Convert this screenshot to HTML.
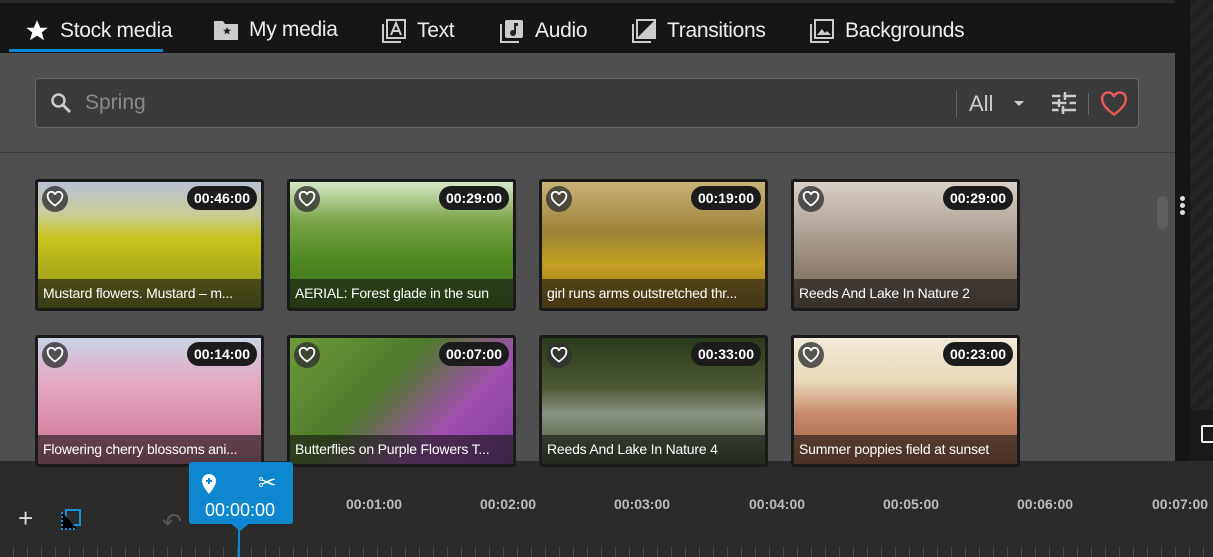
<!DOCTYPE html>
<html><head><meta charset="utf-8"><style>
*{margin:0;padding:0;box-sizing:border-box}
body{width:1213px;height:557px;overflow:hidden;background:#2b2b2b;font-family:"Liberation Sans",sans-serif;position:relative}
.top{position:absolute;left:0;top:0;width:1190px;height:53px;background:#161616;border-top:3px solid #2a2a2a}
.tab{position:absolute;top:18px;color:#eee;font-size:21px;display:flex;align-items:center;gap:10px;letter-spacing:-0.3px}
.ul{position:absolute;left:9px;top:49px;width:154px;height:3px;background:#0d88d0}
.panel{position:absolute;left:0;top:53px;width:1175px;height:408px;background:#4f4f4f}
.sep{position:absolute;left:0;top:152px;width:1175px;height:1px;background:#3c3c3c}
.search{position:absolute;left:35px;top:78px;width:1104px;height:50px;background:#3b3b3b;border:1px solid #6a6a6a;border-radius:4px}
.rcol{position:absolute;left:1175px;top:0;width:15px;height:461px;background:#161616}
.strip{position:absolute;left:1190px;top:0;width:23px;height:410px;background:repeating-linear-gradient(135deg,#202020 0 6px,#262626 6px 12px)}
.strip2{position:absolute;left:1190px;top:410px;width:23px;height:51px;background:#1a1a1a}
.card{position:absolute;width:229px;height:132px;border:3px solid #1a1a1a;border-radius:3px;overflow:hidden}
.cap{position:absolute;left:0;bottom:0;width:100%;height:29px;background:rgba(20,20,20,.6);color:#fff;font-size:14px;padding:6px 0 0 5px;white-space:nowrap;letter-spacing:-0.2px}
.dur{position:absolute;right:4px;top:4px;background:#1c1c1c;color:#fff;font-weight:bold;font-size:14px;border-radius:14px;padding:4px 7px}
.hrt{position:absolute;left:4px;top:4px;width:26px;height:26px;border-radius:50%;background:rgba(50,50,50,.8);display:flex;align-items:center;justify-content:center}
.tl{position:absolute;top:496px;color:#bbb;font-size:14px;font-weight:bold}
</style></head><body>
<div class="top"></div>
<div class="tab" style="left:24px"><svg width="26" height="26" viewBox="0 0 24 24"><path fill="#fff" d="M12 2l3 7h7l-5.6 4.3 2.1 7.2L12 16.3 5.5 20.5l2.1-7.2L2 9h7z"/></svg>Stock media</div>
<div class="tab" style="left:213px"><svg width="26" height="24" viewBox="0 0 26 24"><path fill="#ccc" d="M1 3h9l2 3h13v16H1z"/><path fill="#222" d="M14 9l1.2 2.6 2.8.2-2.1 1.8.7 2.8-2.6-1.5-2.5 1.5.6-2.8-2-1.8 2.8-.2z"/></svg>My media</div>
<div class="tab" style="left:381px"><svg width="26" height="26" viewBox="0 0 26 26"><path fill="none" stroke="#ccc" stroke-width="2" d="M2 6v18h18"/><rect x="6" y="2" width="18" height="18" fill="none" stroke="#ccc" stroke-width="2"/><path fill="none" stroke="#ccc" stroke-width="2" d="M10 17l5-12 5 12M12 13h6"/></svg>Text</div>
<div class="tab" style="left:499px"><svg width="26" height="26" viewBox="0 0 26 26"><path fill="none" stroke="#ccc" stroke-width="2" d="M2 6v18h18"/><rect x="6" y="2" width="18" height="18" rx="2" fill="#ccc"/><path fill="#222" d="M15 5h4v3h-2v7a3 3 0 1 1-2-2.8z"/></svg>Audio</div>
<div class="tab" style="left:631px"><svg width="26" height="26" viewBox="0 0 26 26"><path fill="none" stroke="#ccc" stroke-width="2" d="M2 6v18h18"/><rect x="6" y="2" width="18" height="18" fill="none" stroke="#ccc" stroke-width="2"/><path fill="#ccc" d="M7 19L23 3v16z"/></svg>Transitions</div>
<div class="tab" style="left:809px"><svg width="26" height="26" viewBox="0 0 26 26"><path fill="none" stroke="#ccc" stroke-width="2" d="M2 6v18h18"/><rect x="6" y="2" width="18" height="18" fill="none" stroke="#ccc" stroke-width="2"/><path fill="#ccc" d="M8 17l5-6 3 4 2-2 4 4z"/></svg>Backgrounds</div>
<div class="ul"></div>
<div class="panel"></div>
<div class="sep"></div>
<div class="search">
<svg style="position:absolute;left:13px;top:12px" width="24" height="24" viewBox="0 0 24 24"><circle cx="9.5" cy="9.5" r="6" fill="none" stroke="#ccc" stroke-width="2.5"/><path d="M14 14l7 7" stroke="#ccc" stroke-width="3"/></svg>
<span style="position:absolute;left:49px;top:12px;color:#8a8a8a;font-size:21px">Spring</span>
<div style="position:absolute;left:920px;top:12px;width:1px;height:26px;background:#666"></div>
<span style="position:absolute;left:933px;top:12px;color:#ccc;font-size:22px">All</span>
<div style="position:absolute;left:978px;top:22px;border:5px solid transparent;border-top:5px solid #ccc"></div>
<svg style="position:absolute;left:1015px;top:12px" width="26" height="24" viewBox="0 0 26 24"><path stroke="#ccc" stroke-width="2.5" d="M1 5h24M1 12h24M1 19h24"/><path stroke="#3b3b3b" stroke-width="3" d="M11 3v5M17 10v5M9 17v5"/><path stroke="#ccc" stroke-width="2.5" d="M14 1v8M8 8v8M12 15v8"/></svg>
<div style="position:absolute;left:1052px;top:14px;width:1px;height:22px;background:#666"></div>
<svg style="position:absolute;left:1064px;top:12px" width="28" height="26" viewBox="0 0 24 22"><path fill="none" stroke="#ef5a5a" stroke-width="2" d="M12 20S2 13.5 2 7.5A5 5 0 0 1 12 5a5 5 0 0 1 10 2.5C22 13.5 12 20 12 20z"/></svg>
</div>
<div style="position:absolute;left:1157px;top:196px;width:11px;height:33px;border-radius:6px;background:#5e5e5e"></div>
<div class="rcol"></div><div class="strip"></div><div class="strip2"></div>
<div style="position:absolute;left:1180px;top:196px;width:5px;height:5px;border-radius:50%;background:#ddd;box-shadow:0 7px 0 #ddd,0 14px 0 #ddd"></div>
<div style="position:absolute;left:1201px;top:425px;width:14px;height:18px;border:2px solid #eee;border-radius:2px"></div>

<div class="card" style="left:35px;top:179px;background:linear-gradient(180deg,#b9bfd6 0,#c9cd9a 25%,#c7c51a 45%,#a6a71a 75%,#6f7a1a 100%)"><div class="hrt"><svg width="18" height="16" viewBox="0 0 24 22"><path fill="none" stroke="#fff" stroke-width="2.5" d="M12 20S2 13.5 2 7.5A5 5 0 0 1 12 5a5 5 0 0 1 10 2.5C22 13.5 12 20 12 20z"/></svg></div><div class="dur">00:46:00</div><div class="cap">Mustard flowers. Mustard – m...</div></div>
<div class="card" style="left:287px;top:179px;background:linear-gradient(180deg,#d6e8c8 0,#7ea54a 30%,#4f8a22 60%,#3e6d18 100%)"><div class="hrt"><svg width="18" height="16" viewBox="0 0 24 22"><path fill="none" stroke="#fff" stroke-width="2.5" d="M12 20S2 13.5 2 7.5A5 5 0 0 1 12 5a5 5 0 0 1 10 2.5C22 13.5 12 20 12 20z"/></svg></div><div class="dur">00:29:00</div><div class="cap">AERIAL: Forest glade in the sun</div></div>
<div class="card" style="left:539px;top:179px;background:linear-gradient(180deg,#c8b478 0,#9c8236 40%,#c4a023 65%,#8c6c14 100%)"><div class="hrt"><svg width="18" height="16" viewBox="0 0 24 22"><path fill="none" stroke="#fff" stroke-width="2.5" d="M12 20S2 13.5 2 7.5A5 5 0 0 1 12 5a5 5 0 0 1 10 2.5C22 13.5 12 20 12 20z"/></svg></div><div class="dur">00:19:00</div><div class="cap">girl runs arms outstretched thr...</div></div>
<div class="card" style="left:791px;top:179px;background:linear-gradient(180deg,#d8cfc6 0,#a49689 50%,#6e5c4e 100%)"><div class="hrt"><svg width="18" height="16" viewBox="0 0 24 22"><path fill="none" stroke="#fff" stroke-width="2.5" d="M12 20S2 13.5 2 7.5A5 5 0 0 1 12 5a5 5 0 0 1 10 2.5C22 13.5 12 20 12 20z"/></svg></div><div class="dur">00:29:00</div><div class="cap">Reeds And Lake In Nature 2</div></div>
<div class="card" style="left:35px;top:335px;background:linear-gradient(180deg,#c9d4e6 0,#e4a8c2 35%,#d98aa8 70%,#b86d8a 100%)"><div class="hrt"><svg width="18" height="16" viewBox="0 0 24 22"><path fill="none" stroke="#fff" stroke-width="2.5" d="M12 20S2 13.5 2 7.5A5 5 0 0 1 12 5a5 5 0 0 1 10 2.5C22 13.5 12 20 12 20z"/></svg></div><div class="dur">00:14:00</div><div class="cap">Flowering cherry blossoms ani...</div></div>
<div class="card" style="left:287px;top:335px;background:linear-gradient(135deg,#6e9a3a 0,#4e7a2a 40%,#a14fb0 70%,#7a3c98 100%)"><div class="hrt"><svg width="18" height="16" viewBox="0 0 24 22"><path fill="none" stroke="#fff" stroke-width="2.5" d="M12 20S2 13.5 2 7.5A5 5 0 0 1 12 5a5 5 0 0 1 10 2.5C22 13.5 12 20 12 20z"/></svg></div><div class="dur">00:07:00</div><div class="cap">Butterflies on Purple Flowers T...</div></div>
<div class="card" style="left:539px;top:335px;background:linear-gradient(180deg,#2a3a1c 0,#4e5a36 40%,#8a9484 60%,#3c4a2a 100%)"><div class="hrt"><svg width="18" height="16" viewBox="0 0 24 22"><path fill="none" stroke="#fff" stroke-width="2.5" d="M12 20S2 13.5 2 7.5A5 5 0 0 1 12 5a5 5 0 0 1 10 2.5C22 13.5 12 20 12 20z"/></svg></div><div class="dur">00:33:00</div><div class="cap">Reeds And Lake In Nature 4</div></div>
<div class="card" style="left:791px;top:335px;background:linear-gradient(180deg,#f0ead8 0,#e8d8b8 35%,#c98a6a 60%,#9c5a42 100%)"><div class="hrt"><svg width="18" height="16" viewBox="0 0 24 22"><path fill="none" stroke="#fff" stroke-width="2.5" d="M12 20S2 13.5 2 7.5A5 5 0 0 1 12 5a5 5 0 0 1 10 2.5C22 13.5 12 20 12 20z"/></svg></div><div class="dur">00:23:00</div><div class="cap">Summer poppies field at sunset</div></div>

<div style="position:absolute;left:18px;top:508px;color:#ddd;font-size:26px;line-height:20px">+</div>
<svg style="position:absolute;left:59px;top:508px" width="24" height="24" viewBox="0 0 24 24"><rect x="7" y="2" width="14" height="15" fill="none" stroke="#1a8fd6" stroke-width="2"/><path stroke="#1a8fd6" stroke-width="2" stroke-dasharray="2 2" d="M3 4v17h15"/></svg>
<div style="position:absolute;left:162px;top:508px;color:#555;font-size:24px">↶</div>
<div style="position:absolute;left:0;top:547px;width:1213px;height:10px;background:repeating-linear-gradient(90deg,transparent 0 13px,#555 13px 14px);opacity:.8"></div>
<div class="tl" style="left:346px">00:01:00</div><div class="tl" style="left:480px">00:02:00</div><div class="tl" style="left:614px">00:03:00</div><div class="tl" style="left:749px">00:04:00</div><div class="tl" style="left:883px">00:05:00</div><div class="tl" style="left:1017px">00:06:00</div><div class="tl" style="left:1152px">00:07:00</div>
<div style="position:absolute;left:189px;top:462px;width:104px;height:62px;background:#0d88d0;border-radius:3px"></div>
<div style="position:absolute;left:230px;top:523px;border:10px solid transparent;border-top:8px solid #0d88d0"></div>
<div style="position:absolute;left:238px;top:528px;width:2px;height:29px;background:#0d88d0"></div>
<svg style="position:absolute;left:201px;top:474px" width="16" height="20" viewBox="0 0 16 20"><path fill="#fff" d="M8 0a7 7 0 0 1 7 7c0 5-7 13-7 13S1 12 1 7a7 7 0 0 1 7-7z"/><path stroke="#0d88d0" stroke-width="2" d="M8 4v6M5 7h6"/></svg>
<div style="position:absolute;left:258px;top:470px;color:#fff;font-size:22px">✂</div>
<div style="position:absolute;left:205px;top:500px;color:#fff;font-size:18px">00:00:00</div>
</body></html>
